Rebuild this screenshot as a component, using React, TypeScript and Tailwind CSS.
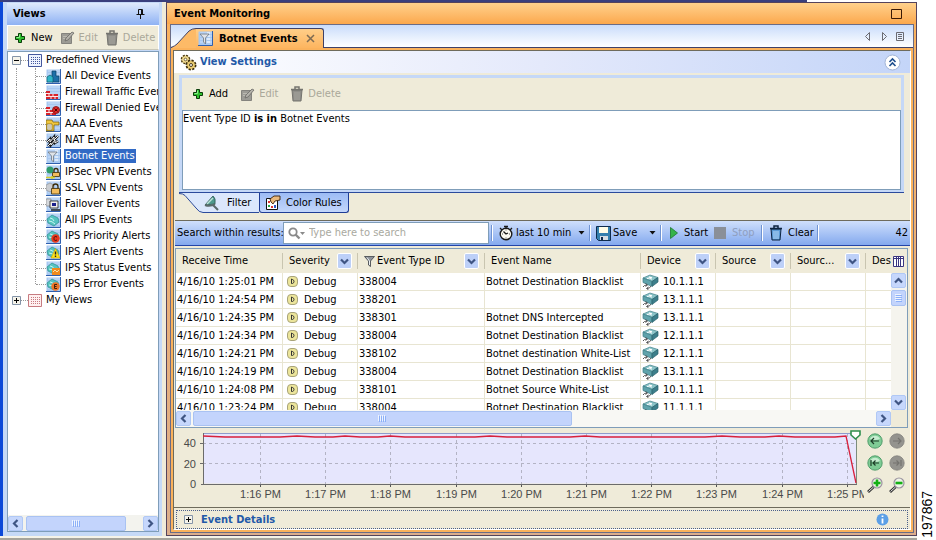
import React from 'react';

const headBtn = 'flex items-center gap-1 whitespace-nowrap';

const PlusIcon: React.FC = () => (
  <svg width="12" height="12" viewBox="0 0 12 12" className="shrink-0">
    <path d="M4.500 1.500h3v3h3v3h-3v3h-3v-3h-3v-3h3z" fill="#2fc02f" stroke="#0a3d0a" />
    <path d="M5.500 2.500v3h-3" stroke="#8df08d" fill="none" />
  </svg>
);

const EditIcon: React.FC = () => (
  <svg width="15" height="15" viewBox="0 0 15 15" className="shrink-0">
    <path d="M1.500 3.500h10v10h-10z" fill="#9c9b95" stroke="#84837e" />
    <path d="M5 11l1-3 6-6 2 1-6 7z" fill="#b4b2ab" stroke="#6c6b67" strokeWidth="0.8" />
    <path d="M3 6.500h4M3 8.500h2" stroke="#bbb9b1" />
  </svg>
);

const TrashIcon: React.FC<{ color?: boolean }> = ({ color }) => (
  <svg width="14" height="16" viewBox="0 0 14 16" className="shrink-0">
    <path d="M2 4h10l-1 11H3z" fill={color ? '#5b9bd5' : '#8f8e89'} stroke={color ? '#0c2340' : '#75746f'} />
    <path d="M5 6v8M7 6v8M9 6v8" stroke={color ? '#bfe0fa' : '#a9a8a2'} strokeWidth="0.9" />
    <path d="M1 3.500h12M5 3V1h4v2" fill="none" stroke={color ? '#0c2340' : '#75746f'} strokeWidth="1.500" />
  </svg>
);

const FunnelIcon: React.FC = () => (
  <svg width="11" height="11" viewBox="0 0 11 11" className="shrink-0">
    <path d="M0.500 0.500h10L6.500 5v5.500L4.500 9V5z" fill="#8d9299" stroke="#3d4148" strokeWidth="0.8" />
    <path d="M3 1.500L5.500 5v4" stroke="#e9edf2" fill="none" />
  </svg>
);

const badges: Record<string, React.ReactNode> = {
  device: (
    <g>
      <path d="M6 2h4v5h3v6H6z" fill="#1d6fa8" stroke="#0a3f66" strokeWidth="0.7" />
      <path d="M1 8l3-2 3 2v5H1z" fill="#30b5c9" stroke="#0a5d6b" strokeWidth="0.7" />
    </g>
  ),
  wall: (
    <g>
      <path d="M0 6h4v3h8v5H0z" fill="#d8232a" />
      <path d="M0 8.500h4M0 11.500h12M3 9v2M7 9v2M5 12v2M9 12v2" stroke="#fff" strokeWidth="0.9" />
    </g>
  ),
  denied: (
    <g>
      <path d="M0 6h4v3h6v5H0z" fill="#d8232a" />
      <path d="M0 8.500h4M0 11.500h8M3 9v2M5 12v2" stroke="#fff" strokeWidth="0.9" />
      <circle cx="10" cy="9" r="3.500" fill="#e02828" stroke="#7a0d0d" strokeWidth="0.8" />
      <path d="M8.500 7.500l3 3M11.500 7.500l-3 3" stroke="#4d0505" />
    </g>
  ),
  aaa: (
    <g>
      <path d="M0 3h6l1 2h6v3H8v6H0z" fill="#f0c63c" stroke="#6b5410" strokeWidth="0.7" />
      <path d="M1 7h5v6H1z" fill="#f7f3dc" stroke="#6b5410" strokeWidth="0.6" />
      <path d="M2 9h3M2 11h3" stroke="#777" strokeWidth="0.7" />
    </g>
  ),
  nat: (
    <g fill="none" stroke="#1c1c1c">
      <path d="M1 9l3-3v3l4-5v3l4-4M2 13l3-3v2l4-5v3l3-2" strokeWidth="2.400" />
      <path d="M1 9l3-3v3l4-5v3l4-4M2 13l3-3v2l4-5v3l3-2" stroke="#f4f4f4" />
    </g>
  ),
  botnet: (
    <g>
      <path d="M9 2h3M9 5h3M9 8h3M9 11h3" stroke="#fff" />
      <path d="M2 3h9L7.500 7v6L5.500 11V7z" fill="#dfe3e8" stroke="#6f7780" strokeWidth="0.8" />
    </g>
  ),
  ipsec: (
    <g>
      <circle cx="4" cy="5" r="3.500" fill="#2f9c6c" />
      <path d="M8 8V5.500a2 2 0 0 1 4 0V8" fill="none" stroke="#3c2d09" strokeWidth="1.300" />
      <path d="M6.500 7.500h7v4h-7z" fill="#f2bc5c" stroke="#3c2d09" strokeWidth="0.8" />
      <path d="M0 12.500h9M6 11v3" stroke="#d8d02c" strokeWidth="1.600" />
    </g>
  ),
  ssl: (
    <g>
      <path d="M0 4l4-2 4 2v5l-4 2-4-2z" fill="#c9ccd0" stroke="#8f9296" strokeWidth="0.7" />
      <path d="M7 8V5.500a2.500 2.500 0 0 1 5 0V8" fill="none" stroke="#3c2d09" strokeWidth="1.300" />
      <path d="M5.500 7.500h8v5.500h-8z" fill="#f2bc5c" stroke="#3c2d09" strokeWidth="0.8" />
    </g>
  ),
  failover: (
    <g>
      <path d="M0 2h5v7H0z" fill="#d5d8dc" stroke="#888" strokeWidth="0.7" />
      <path d="M4 4h8v7H4z" fill="#eee" stroke="#222" strokeWidth="0.8" />
      <path d="M6 6h4v3H6z" fill="#1a1f8c" />
      <path d="M5 13h9" stroke="#222" strokeWidth="1.500" />
    </g>
  ),
  ips: null,
  critical: (
    <g>
      <circle cx="9.500" cy="9.500" r="4.200" fill="#e8361c" />
      <path d="M11 8q-3-1.500-3 1.500t3 1.500" fill="none" stroke="#42100a" />
    </g>
  ),
  alert: (
    <g>
      <path d="M9.500 3.500l4.500 9.500H5z" fill="#ffe31a" stroke="#c9a500" strokeWidth="0.6" />
      <path d="M9.500 6.500v3M9.500 10.500v1.500" stroke="#222" strokeWidth="1.400" />
    </g>
  ),
  status: (
    <g>
      <path d="M6 7h8v7H6z" fill="#f08a1c" />
      <path d="M7 11l2-2 2 2 2-2" fill="none" stroke="#fbe0a8" />
    </g>
  ),
  error: (
    <g>
      <circle cx="9.500" cy="9.500" r="4.200" fill="#ee7427" />
      <path d="M11 7.500H8.500v4H11M8.500 9.500h2" fill="none" stroke="#42200a" />
    </g>
  ),
};

const ViewIcon: React.FC<{ kind: string }> = ({ kind }) => {
  const ips = ['ips', 'critical', 'alert', 'status', 'error'].includes(kind);
  return (
    <svg width="15" height="15" viewBox="0 0 15 15" className="shrink-0">
      <path d="M0.500 0.500h14v14H0.500z" fill="#a8c8f0" />
      <path d="M2 2h12M2 5h12M2 8h12M2 11h12" stroke="#c9dffa" />
      <path d="M14.500 0v14.500H0" fill="none" stroke="#2f5fae" />
      {ips && (
        <g>
          <path d="M1 6l5-4 6 3 1 4-5 4-6-3z" fill="#55c4c0" stroke="#2c8c8c" strokeWidth="0.7" />
          <path d="M4 5q3 0 4 3M3 8q3 0 6 3" stroke="#c9f4ef" fill="none" />
        </g>
      )}
      {badges[kind]}
    </svg>
  );
};

const GridIcon: React.FC<{ color: string; fill: string }> = ({ color, fill }) => (
  <svg width="14" height="13" viewBox="0 0 14 13" className="shrink-0">
    <path d="M0.500 0.500h13v12h-13z" fill={fill} stroke={color} />
    <path d="M3 3.500h9M3 5.500h9M3 7.500h9M3 9.500h9" stroke={color} strokeDasharray="1 1" />
  </svg>
);

const Expander: React.FC<{ open?: boolean; label: string }> = ({ open, label }) => (
  <button aria-label={label} className="shrink-0">
    <svg width="9" height="9" viewBox="0 0 9 9">
      <path d="M0.500 0.500h8v8h-8z" fill="#f5f3ea" stroke="#8494a8" />
      <path d={open ? 'M2 4.500h5' : 'M2 4.500h5M4.500 2v5'} stroke="#000" />
    </svg>
  </button>
);

const views = [
  ['All Device Events', 'device'],
  ['Firewall Traffic Events', 'wall'],
  ['Firewall Denied Events', 'denied'],
  ['AAA Events', 'aaa'],
  ['NAT Events', 'nat'],
  ['Botnet Events', 'botnet'],
  ['IPSec VPN Events', 'ipsec'],
  ['SSL VPN Events', 'ssl'],
  ['Failover Events', 'failover'],
  ['All IPS Events', 'ips'],
  ['IPS Priority Alerts', 'critical'],
  ['IPS Alert Events', 'alert'],
  ['IPS Status Events', 'status'],
  ['IPS Error Events', 'error'],
];

const arrows: Record<string, string> = {
  left: 'M7.500 2L4 5.500L7.500 9',
  right: 'M3.500 2L7 5.500L3.500 9',
  up: 'M2 7.500L5.500 4L9 7.500',
  down: 'M2 3.500L5.500 7L9 3.500',
};

const ScrollButton: React.FC<{ dir: string }> = ({ dir }) => (
  <button
    aria-label={`Scroll ${dir}`}
    className="flex h-[15px] w-[15px] shrink-0 items-center justify-center rounded-[2px] border border-[#b0c8f5] bg-[#c6d7fc]"
  >
    <svg width="11" height="11" viewBox="0 0 11 11">
      <path d={arrows[dir]} fill="none" stroke="#3f5583" strokeWidth="2.200" />
    </svg>
  </button>
);

const Grip: React.FC = () => (
  <svg width="9" height="7" viewBox="0 0 9 7">
    <path d="M0.500 0v6M2.500 0v6M4.500 0v6M6.500 0v6" stroke="#eef4fe" />
    <path d="M1.500 1v6M3.500 1v6M5.500 1v6M7.500 1v6" stroke="#8cb0f8" />
  </svg>
);

const ViewsPanel: React.FC = () => (
  <aside className="flex w-[152px] shrink-0 flex-col overflow-hidden">
    <h2 className="flex h-[22px] shrink-0 items-center justify-between bg-gradient-to-b from-[#dfeafc] to-[#8fb2f3] pr-[14px] pl-[6px] font-bold">
      Views
      <button aria-label="Pin panel">
        <svg width="9" height="10" viewBox="0 0 9 10">
          <path d="M2.500 0.500h4v5h-4zM5.500 1v4M0.500 5.500h8M4.500 6v4" fill="none" stroke="#111" />
        </svg>
      </button>
    </h2>
    <div className="flex h-[25px] shrink-0 items-center gap-[7px] border border-white border-b-[#c9c7b8] bg-[#efebd9] pl-[6px]">
      <button className={headBtn}>
        <PlusIcon />
        <span className="pl-px">New</span>
      </button>
      <button disabled className={`${headBtn} text-[#aaa899]`}>
        <EditIcon />
        Edit
      </button>
      <button disabled className={`${headBtn} text-[#aaa899]`}>
        <TrashIcon />
        Delete
      </button>
    </div>
    <div className="mt-px flex min-h-0 flex-1 flex-col border border-[#7f9db9] bg-white">
      <ul className="min-h-0 flex-1 overflow-hidden whitespace-nowrap">
        <li>
          <div className="flex h-4 items-center pl-1">
            <Expander open label="Collapse Predefined Views" />
            <span className="w-[7px] border-b border-dotted border-[#999]" />
            <GridIcon color="#44589e" fill="#eef3ff" />
            <span className="pl-1">Predefined Views</span>
          </div>
          <ul>
            {views.map(([name, icon], i) => (
              <li key={name} className="flex h-4 items-center">
                <span className="h-4 w-[9px] shrink-0 border-r border-dotted border-[#999]" />
                <span
                  className={`${i === views.length - 1 ? 'h-2' : 'h-4'} w-[19px] shrink-0 self-start border-r border-dotted border-[#999]`}
                />
                <span className="w-[10px] shrink-0 border-b border-dotted border-[#999]" />
                <ViewIcon kind={icon} />
                <span className="w-[3px] shrink-0" />
                <span className={name === 'Botnet Events' ? 'bg-[#316ac5] px-px text-white' : 'px-px'}>{name}</span>
              </li>
            ))}
          </ul>
        </li>
        <li className="flex h-4 items-center pl-1">
          <Expander label="Expand My Views" />
          <span className="w-[7px] border-b border-dotted border-[#999]" />
          <GridIcon color="#c77b80" fill="#fff0f0" />
          <span className="pl-1">My Views</span>
        </li>
      </ul>
      <div className="flex h-4 shrink-0 items-center bg-[#f3f3ee]">
        <ScrollButton dir="left" />
        <div className="ml-[3px] flex h-[15px] w-[100px] items-center justify-center rounded-[2px] border border-[#a9c2f2] bg-[#c3d4fc]">
          <Grip />
        </div>
        <span className="flex-1" />
        <ScrollButton dir="right" />
      </div>
    </div>
  </aside>
);

const FilterEditor: React.FC = () => (
  <section className="shrink-0 bg-[#efebd9] pb-[7px]">
    <h3 className="flex h-[22px] items-center bg-gradient-to-r from-white via-[#e4e9fb] to-[#c4d5f8] pr-[9px] pl-[6px] font-bold text-[#2259a8]">
      <svg width="17" height="17" viewBox="0 0 17 17">
        <circle cx="5.500" cy="5.500" r="4" fill="#eed58a" stroke="#4c3b12" strokeWidth="1.600" strokeDasharray="2 1.140" />
        <circle cx="5.500" cy="5.500" r="3.200" fill="#efd98f" />
        <circle cx="5.500" cy="5.500" r="1.300" fill="#fff" stroke="#4c3b12" strokeWidth="0.700" />
        <circle cx="11" cy="11" r="4.600" fill="#e3c365" stroke="#3a2c0c" strokeWidth="1.800" strokeDasharray="2.200 1.400" />
        <circle cx="11" cy="11" r="3.600" fill="#e9cb72" />
        <circle cx="11" cy="11" r="1.500" fill="#fff" stroke="#3a2c0c" strokeWidth="0.900" />
      </svg>
      <span className="flex-1 pl-[3px]">View Settings</span>
      <button aria-label="Collapse View Settings">
        <svg width="17" height="17" viewBox="0 0 17 17">
          <circle cx="8.500" cy="8.500" r="7.500" fill="#fff" stroke="#a3b5d6" />
          <path d="M5.500 8l3-3 3 3M5.500 12l3-3 3 3" fill="none" stroke="#1f4f8f" strokeWidth="1.600" />
        </svg>
      </button>
    </h3>
    <div className="mt-[2px] mr-[6px] ml-[5px] border-[3px] border-b-[2px] border-[#c5d8f7]">
      <div className="flex h-8 items-center gap-3 pl-[10px]">
        <button className={headBtn}>
          <PlusIcon />
          <span className="pl-px">Add</span>
        </button>
        <button disabled className={`${headBtn} text-[#aaa899]`}>
          <EditIcon />
          Edit
        </button>
        <button disabled className={`${headBtn} text-[#aaa899]`}>
          <TrashIcon />
          Delete
        </button>
      </div>
      <div className="h-20 border border-[#7f9db9] bg-white pt-px">
        Event Type ID <b>is in</b> Botnet Events
      </div>
    </div>
    <div className="mr-[6px] ml-[5px] flex h-[21px] border-t border-[#2b4a9c]" role="tablist">
      <svg width="24" height="20" viewBox="0 0 24 20" className="shrink-0">
        <path d="M0 0h24v19.500Q20 19.500 17 15L6 2Q4 0 0 0" fill="#dbe7fc" />
        <path d="M0 0.500Q4 0.500 6 2.500L17 15Q20 19.500 24 19.500" fill="none" stroke="#2b4a9c" />
      </svg>
      <button role="tab" aria-selected="true" className="flex h-5 w-[56px] items-center gap-[6px] border-b border-[#2b4a9c] bg-[#dbe7fc]">
        <svg width="18" height="16" viewBox="0 0 18 16" className="shrink-0">
          <path d="M2 10L10 1q3 2 2 8z" fill="#4f9a8d" stroke="#28564e" strokeWidth="0.800" />
          <path d="M4 9l6-6" stroke="#bfe3da" strokeWidth="1.500" />
          <path d="M2 10q5 2 10-1M10 10l5 5" fill="none" stroke="#5a6a6a" strokeWidth="2" />
        </svg>
        Filter
      </button>
      <button
        role="tab"
        aria-selected="false"
        className="flex h-5 w-[90px] items-center gap-[5px] rounded-b-[3px] border border-t-0 border-[#1e3c96] bg-gradient-to-b from-[#9dbcf5] to-[#c3d6fb] pl-[5px] whitespace-nowrap"
      >
        <svg width="16" height="15" viewBox="0 0 16 15" className="shrink-0">
          <path d="M1.500 3.500h11v11h-11z" fill="#fff" stroke="#111" />
          <path d="M3 6h2v2H3zM6 11h2v2H6z" fill="#d33" />
          <path d="M3 10h2v2H3z" fill="#28a745" />
          <path d="M9 10h2v3H9z" fill="#2a59c9" />
          <path d="M5 4l4-3h6v4l-5 1-2 3-2-2z" fill="#e9b97c" stroke="#3b230b" strokeWidth="0.900" />
        </svg>
        Color Rules
      </button>
    </div>
  </section>
);

const Caret: React.FC = () => (
  <svg width="7" height="4" viewBox="0 0 7 4" className="shrink-0">
    <path d="M0.500 0h6L3.500 3.500z" fill="#111" />
  </svg>
);

const Divider: React.FC = () => <span className="h-4 w-[2px] shrink-0 border-l border-[#6f93d2] bg-white" />;

const ResultsBar: React.FC = () => (
  <div className="flex h-[26px] shrink-0 items-center border-t border-b border-t-[#6e6b5c] border-b-[#2445a8] bg-gradient-to-b from-[#cfdffb] to-[#84a9ee] pr-[2px] pl-[2px] whitespace-nowrap">
    <label htmlFor="search" className="w-[106px] shrink-0">
      Search within results:
    </label>
    <div className="flex h-[22px] w-[206px] items-center gap-1 border border-[#7f9db9] bg-white pl-1">
      <svg width="17" height="13" viewBox="0 0 17 13" className="shrink-0">
        <circle cx="5" cy="5" r="3.700" fill="none" stroke="#8a8a8a" strokeWidth="1.800" />
        <path d="M7.500 7.500l4 4" stroke="#8a8a8a" strokeWidth="2.400" />
        <path d="M12 5h5l-2.500 3z" fill="#8a8a8a" />
      </svg>
      <input
        id="search"
        placeholder="Type here to search"
        className="w-full min-w-0 bg-transparent outline-none placeholder:text-[#a9a9a0]"
      />
    </div>
    <span className="w-[2px] shrink-0" />
    <Divider />
    <button className="flex w-[92px] items-center pl-[5px]">
      <svg width="16" height="16" viewBox="0 0 16 16" className="mr-[2px] shrink-0">
        <circle cx="8" cy="9" r="5.800" fill="#fbfaf3" stroke="#1a1a1a" strokeWidth="1.400" />
        <path d="M6 1.500h4M8 1v2.500M2 3l2 2M14 3l-2 2M8 9L5.500 6.500M8 9l2-1" fill="none" stroke="#1a1a1a" strokeWidth="1.300" />
        <path d="M8 4.500v1M8 12.500v1M4 9h1M11 9h1" stroke="#555" />
      </svg>
      <span className="flex-1 text-left">last 10 min</span>
      <Caret />
    </button>
    <span className="w-1 shrink-0" />
    <Divider />
    <button className="flex w-[65px] items-center pl-[5px]">
      <svg width="15" height="15" viewBox="0 0 15 15" className="mr-[2px] shrink-0">
        <path d="M0.500 0.500h14v14h-12l-2-2z" fill="#347fae" stroke="#0e2b4e" />
        <path d="M3 1h9v6H3z" fill="#fffde8" />
        <path d="M4 10h8v4H4z" fill="#d5dde4" />
        <path d="M5 11h2v3H5z" fill="#0e2b4e" />
      </svg>
      <span className="flex-1 text-left">Save</span>
      <Caret />
    </button>
    <span className="w-1 shrink-0" />
    <Divider />
    <button className="flex w-[46px] items-center gap-[6px] pl-[8px]">
      <svg width="8" height="12" viewBox="0 0 8 12" className="shrink-0">
        <path d="M0.500 0.500L7.500 6L0.500 11.500z" fill="#35b34a" stroke="#1b7a2d" strokeWidth="0.800" />
      </svg>
      Start
    </button>
    <button disabled className="flex w-[46px] items-center gap-[6px] pl-[6px] text-[#8f9fbf]">
      <span className="h-3 w-3 shrink-0 bg-[#8a8f98]" />
      Stop
    </button>
    <span className="w-[7px] shrink-0" />
    <Divider />
    <button className="flex w-[54px] items-center gap-[5px] pl-[6px]">
      <TrashIcon color />
      Clear
    </button>
    <Divider />
    <span className="flex-1 text-right">42</span>
  </div>
);

const MenuButton: React.FC<{ label: string }> = ({ label }) => (
  <button
    aria-label={`${label} column menu`}
    className="flex h-4 w-[15px] shrink-0 items-center justify-center rounded-[2px] border border-white bg-[#bdd0f8]"
  >
    <svg width="11" height="11" viewBox="0 0 11 11">
      <path d={arrows.down} fill="none" stroke="#3f5583" strokeWidth="2.200" />
    </svg>
  </button>
);

const columns = [
  { name: 'Receive Time', menu: false },
  { name: 'Severity', menu: true },
  { name: 'Event Type ID', menu: true, funnel: true },
  { name: 'Event Name', menu: false },
  { name: 'Device', menu: true },
  { name: 'Source', menu: true },
  { name: 'Sourc...', menu: true },
];

const rows = [
  ['4/16/10 1:25:01 PM', '338004', 'Botnet Destination Blacklist', '10.1.1.1'],
  ['4/16/10 1:24:54 PM', '338201', '', '13.1.1.1'],
  ['4/16/10 1:24:35 PM', '338301', 'Botnet DNS Intercepted', '13.1.1.1'],
  ['4/16/10 1:24:34 PM', '338004', 'Botnet Destination Blacklist', '12.1.1.1'],
  ['4/16/10 1:24:21 PM', '338102', 'Botnet destination White-List', '12.1.1.1'],
  ['4/16/10 1:24:19 PM', '338004', 'Botnet Destination Blacklist', '13.1.1.1'],
  ['4/16/10 1:24:08 PM', '338101', 'Botnet Source White-List', '10.1.1.1'],
  ['4/16/10 1:23:24 PM', '338004', 'Botnet Destination Blacklist', '11.1.1.1'],
];

const cell = 'border-r border-b border-[#e8e5d2] p-0 pl-px';

const DeviceIcon: React.FC = () => (
  <svg width="18" height="16" viewBox="0 0 18 16" className="shrink-0">
    <path d="M1 4l7-3 8 2.500-6 4z" fill="#8cc4c8" stroke="#3f7f88" strokeWidth="0.700" />
    <path d="M1 4l9 3.500v5L1 8.500z" fill="#5fa3ab" stroke="#3f7f88" strokeWidth="0.700" />
    <path d="M10 7.500l6-4v4.500l-6 4.500z" fill="#3c7f8b" stroke="#2b626c" strokeWidth="0.700" />
    <path d="M5 4.500l5-1M7.500 2.500l2 3" stroke="#fff" strokeWidth="1.100" />
    <path d="M0.500 12h9v3.500h-9z" fill="#fff" opacity="0.8" />
    <path d="M1 13q1-2 4-2M3.500 9.500L5.500 11l-2 1.500M9 12q-1 2.500-4 2.500M6.500 13L4.500 14.500l2 1.300" fill="none" stroke="#444" strokeWidth="0.900" />
  </svg>
);

const EventTable: React.FC = () => (
  <div className="mt-[2px] mr-[2px] grid min-h-0 flex-1 grid-cols-[1fr_16px] grid-rows-[24px_1fr_17px] border border-[#7f9db9] bg-white">
    <div className="col-span-2 col-start-1 row-span-2 row-start-1 min-h-0 overflow-hidden">
      <table className="w-full table-fixed border-separate border-spacing-0 whitespace-nowrap">
        <colgroup>
          <col className="w-[107px]" />
          <col className="w-[75px]" />
          <col className="w-[127px]" />
          <col className="w-[156px]" />
          <col className="w-[75px]" />
          <col className="w-[75px]" />
          <col className="w-[75px]" />
          <col />
        </colgroup>
        <thead>
          <tr className="h-6 bg-[#efebd9]">
            {columns.map((c) => (
              <th key={c.name} className="p-0 text-left font-normal">
                <div className="flex h-4 items-center gap-[2px] border-r border-[#c9c5b0] pr-[5px] pl-[6px]">
                  {c.funnel && <FunnelIcon />}
                  <span className="flex-1">{c.name}</span>
                  {c.menu && <MenuButton label={c.name} />}
                </div>
              </th>
            ))}
            <th className="p-0 text-left font-normal">
              <div className="flex items-center gap-[2px] pl-[6px]">
                Des
                <button aria-label="Choose columns">
                  <svg width="11" height="11" viewBox="0 0 11 11">
                    <path d="M0.500 0.500h10v10H0.500zM0.500 2.500h10M3.500 1v9M5.500 1v9M7.500 1v9" fill="#fff" stroke="#3a3580" />
                  </svg>
                </button>
              </div>
            </th>
          </tr>
        </thead>
        <tbody>
          {rows.map(([time, id, name, device]) => (
            <tr key={time} className="h-[18px]">
              <td className={cell}>{time}</td>
              <td className={cell}>
                <div className="flex items-center gap-[6px] pl-[3px]">
                  <svg width="11" height="11" viewBox="0 0 11 11" className="shrink-0">
                    <rect x="0.500" y="0.500" width="10" height="10" rx="3.500" fill="#ece59a" stroke="#a8a37a" />
                    <path d="M4.500 3v4.500h1q1.500-0.500 1.500-2T5.500 3.500z" fill="none" stroke="#333" />
                  </svg>
                  Debug
                </div>
              </td>
              <td className={cell}>{id}</td>
              <td className={cell}>{name}</td>
              <td className={cell}>
                <div className="flex h-[17px] items-center gap-[3px]">
                  <DeviceIcon />
                  {device}
                </div>
              </td>
              <td className={cell} />
              <td className={cell} />
              <td className={cell} />
            </tr>
          ))}
        </tbody>
      </table>
    </div>
    <div className="z-10 col-start-2 row-start-2 flex min-h-0 flex-col bg-[#f5f4ee]">
      <ScrollButton dir="up" />
      <div className="mt-[2px] flex h-4 w-[15px] items-center justify-center rounded-[2px] border border-[#a9c2f2] bg-[#c3d4fc]">
        <svg width="7" height="8" viewBox="0 0 7 8">
          <path d="M0 0.500h6M0 2.500h6M0 4.500h6M0 6.500h6" stroke="#eef4fe" />
          <path d="M1 1.500h6M1 3.500h6M1 5.500h6M1 7.500h6" stroke="#8cb0f8" />
        </svg>
      </div>
      <span className="flex-1" />
      <ScrollButton dir="down" />
    </div>
    <div className="col-start-1 row-start-3 flex items-center bg-[#f8f8f4]">
      <ScrollButton dir="left" />
      <div className="ml-[2px] flex h-[15px] w-[53%] items-center justify-center rounded-[2px] border border-[#a9c2f2] bg-[#c3d4fc]">
        <Grip />
      </div>
      <span className="flex-1" />
      <ScrollButton dir="right" />
    </div>
    <div className="col-start-2 row-start-3 bg-[#efebd9]" />
  </div>
);

const minutes = [16, 17, 18, 19, 20, 21, 22, 23, 24, 25];

const RoundButton: React.FC<{ path: string; label: string; off?: boolean }> = ({ path, label, off }) => (
  <button aria-label={label} disabled={off}>
    <svg width="16" height="16" viewBox="0 0 16 16">
      <circle cx="8" cy="8" r="7.200" fill={off ? '#94938e' : '#7fcb95'} stroke={off ? '#83827d' : '#3b8f5a'} strokeWidth="0.800" />
      {!off && <path d="M3 6a5.500 5.500 0 0 1 10 0q-5 2-10 0" fill="#c6ecd0" />}
      <path d={path} fill="none" stroke={off ? '#74736f' : '#1d3d28'} strokeWidth="1.200" />
    </svg>
  </button>
);

const ZoomButton: React.FC<{ plus?: boolean }> = ({ plus }) => (
  <button aria-label={plus ? 'Zoom in' : 'Zoom out'}>
    <svg width="16" height="16" viewBox="0 0 16 16">
      <path d="M7 9.500L1 15" stroke="#333" strokeWidth="2.800" />
      <path d="M6.500 10L1.500 14.500" stroke="#e6e6e6" />
      <circle cx="10" cy="6" r="5" fill="#eef3e6" stroke="#9b93a0" strokeWidth="1.200" />
      <path d={plus ? 'M6.500 6h7M10 2.500v7' : 'M6.500 6h7'} stroke="#14b014" strokeWidth="2.600" />
    </svg>
  </button>
);

const Timeline: React.FC = () => (
  <div className="flex h-[79px] shrink-0 bg-[#efebd9]">
    <svg
      viewBox="0 0 689 78"
      preserveAspectRatio="xMinYMin meet"
      className="h-[78px] min-w-0 flex-1 font-['Liberation_Sans',sans-serif] text-[11px]"
    >
      <path d="M28 5.500h653v50H28z" fill="#e6e6fd" />
      <path d="M28 5.500h653" stroke="#8f9ccc" />
      <path d="M28 15.500h653M28 35.500h653" stroke="#b3b3c4" strokeDasharray="3 3" />
      {minutes.map((m, i) => {
        const x = Math.round(85 + i * 65.2) + 0.5;
        return (
          <g key={m}>
            <path d={`M${x} 6v50`} stroke="#b3b3c4" strokeDasharray="3 3" />
            <path d={`M${x} 56v3`} stroke="#555" />
            <text x={x} y="70" textAnchor="middle" fill="#4a4a4a">
              {`1:${m} PM`}
            </text>
          </g>
        );
      })}
      <path d="M28.500 5v51M26 56.500h656M25 15.500h3M25 35.500h3" fill="none" stroke="#6b6b6b" />
      <path d="M681.500 10v46" stroke="#7c8c7c" />
      <path
        d="M28 8L50 9H105L122 8L140 9H158L170 8L185 9H203L215 8L230 9H300L315 8L332 9H395L410 8L425 9H530L547 8L565 9H590L604 8L620 9H660L671 8L681 55"
        fill="none"
        stroke="#d8213c"
        strokeWidth="1.300"
      />
      <path d="M676 3h9v4l-4.500 4L676 7z" fill="#fff" stroke="#2f8f4e" strokeWidth="1.600" />
      <g fill="#4a4a4a" textAnchor="end">
        <text x="21" y="19">40</text>
        <text x="21" y="40">20</text>
        <text x="21" y="60">0</text>
      </g>
    </svg>
    <div className="grid w-[46px] shrink-0 grid-cols-2 content-start gap-y-[6px] pt-[5px] pl-[3px]">
      <RoundButton label="Back" path="M12 8H4M7 5L4 8l3 3" />
      <RoundButton off label="Forward" path="M4 8h8M9 5l3 3-3 3" />
      <RoundButton label="First" path="M12 8H6M8.500 5.500L6 8l2.500 2.500M4 5v6" />
      <RoundButton off label="Last" path="M4 8h6M7.500 5.500L10 8l-2.500 2.500M12 5v6" />
      <ZoomButton plus />
      <ZoomButton />
    </div>
  </div>
);

const EventPanel: React.FC = () => (
  <main className="flex min-w-0 flex-1 flex-col border border-[#54435c] bg-gradient-to-b from-[#fbb25c] to-[#dcae8c]">
    <h1 className="flex h-[21px] shrink-0 items-center justify-between bg-gradient-to-b from-[#ffd18b] to-[#fba84c] pr-[14px] pl-[7px] font-bold">
      Event Monitoring
      <button aria-label="Maximize">
        <svg width="11" height="10" viewBox="0 0 11 10">
          <path d="M0.500 0.500h10v9H0.500z" fill="none" stroke="#3a1a05" />
        </svg>
      </button>
    </h1>
    <div className="mr-[2px] mb-[2px] ml-[3px] flex min-h-0 flex-1 flex-col border border-[#6a6c86] bg-[#fbb25c]">
      <div className="flex h-[23px] shrink-0 items-end border-b border-[#3f4168] bg-gradient-to-b from-[#c9dcfb] to-white">
        <svg width="25" height="20" viewBox="0 0 25 20" className="-mb-px shrink-0">
          <path d="M0 20Q4 18 6 16L18 3Q21 0.500 25 0.500V20z" fill="#fdba67" />
          <path d="M0 19.500Q4 18 6 16L18 3Q21 0.500 25 0.500" fill="none" stroke="#3f4168" />
        </svg>
        <div className="-mb-px flex h-5 w-[128px] items-center rounded-tr-[3px] border-t border-r border-[#3f4168] bg-gradient-to-b from-[#ffce88] to-[#fdb55f] pl-[2px] font-bold whitespace-nowrap">
          <ViewIcon kind="botnet" />
          <span className="flex-1 pl-[6px]">Botnet Events</span>
          <button aria-label="Close tab" className="pr-2">
            <svg width="9" height="9" viewBox="0 0 9 9">
              <path d="M1 1l7 7M8 1L1 8" stroke="#7c6a52" strokeWidth="1.500" />
            </svg>
          </button>
        </div>
        <span className="flex-1" />
        <svg width="40" height="11" viewBox="0 0 40 11" className="mr-2 mb-[5px] shrink-0">
          <path d="M4.500 1.500v8L0.500 5.500zM17.500 1.500v8L21.500 5.500zM31.500 1.500h7v8h-7zM33 3.500h4M33 5.500h4M33 7.500h4" fill="none" stroke="#6b6b72" />
        </svg>
      </div>
      <div className="m-[2px] flex min-h-0 flex-1 flex-col overflow-hidden border border-[#6e6b5c] border-r-white border-b-white bg-[#efebd9]">
        <FilterEditor />
        <div className="flex min-h-0 flex-1 flex-col pl-px">
          <ResultsBar />
          <EventTable />
          <Timeline />
        </div>
        <div className="shrink-0 border-t border-[#6e6b5c] p-[2px] pb-0">
          <h3 className="flex h-[19px] items-center border border-dotted border-[#4a5f8a] pr-[18px] pl-[7px] font-bold text-[#2259a8]">
            <Expander label="Expand Event Details" />
            <span className="flex-1 pl-2">Event Details</span>
            <svg width="13" height="13" viewBox="0 0 13 13">
              <circle cx="6.500" cy="6.500" r="6" fill="#5b9fe6" />
              <path d="M6.500 2.500v1.500M6.500 5.500v5" stroke="#fff" strokeWidth="1.800" />
            </svg>
          </h3>
        </div>
      </div>
    </div>
  </main>
);

const App: React.FC = () => (
  <div className="flex h-screen overflow-hidden bg-white font-['DejaVu_Sans_Condensed','DejaVu_Sans',sans-serif] text-[11px] leading-[14px] text-black">
    <div className="flex min-w-0 flex-1 flex-col">
      <div className="h-[2px] w-[88%] shrink-0 bg-[#3a3f7c]" />
      <div className="flex min-h-0 flex-1 border-l-[3px] border-[#0b48d8]">
        <div className="flex shrink-0 bg-[#c5d9f7] pt-px pr-[3px] pb-1 pl-1">
          <ViewsPanel />
        </div>
        <div className="w-1 shrink-0 bg-[#efebd9]" />
        <EventPanel />
      </div>
      <div className="h-1 shrink-0 border-b-2 border-[#a5a49c] bg-[#f5f3e8]" />
    </div>
    <div className="flex w-[19px] shrink-0 items-end justify-center pb-[2px]">
      <span className="rotate-180 font-['Liberation_Sans',sans-serif] text-[14px] leading-[16px] [writing-mode:vertical-rl]">197867</span>
    </div>
  </div>
);

export default App;
